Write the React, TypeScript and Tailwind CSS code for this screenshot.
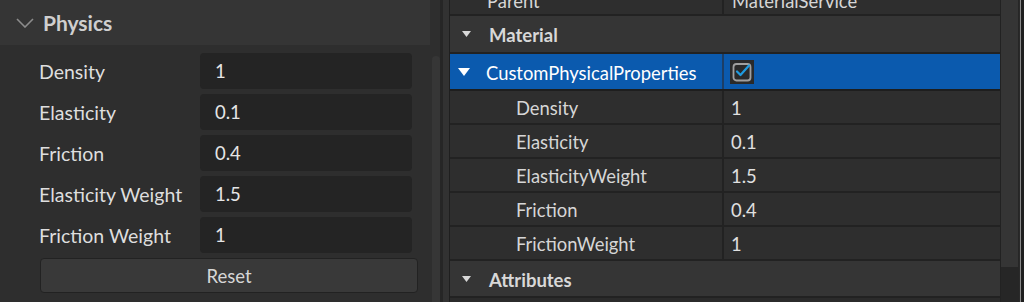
const leftRows = [
  { label: "Density", value: "1" },
  { label: "Elasticity", value: "0.1" },
  { label: "Friction", value: "0.4" },
  { label: "Elasticity Weight", value: "1.5" },
  { label: "Friction Weight", value: "1" },
];

const tableRows = [
  { label: "Density", value: "1" },
  { label: "Elasticity", value: "0.1" },
  { label: "ElasticityWeight", value: "1.5" },
  { label: "Friction", value: "0.4" },
  { label: "FrictionWeight", value: "1" },
];

const Chevron = () => (
  <svg width="18" height="10" viewBox="0 0 18 10" className="shrink-0">
    <path d="M1 1 L9 9 L17 1" fill="none" stroke="#8c8c8c" strokeWidth="1.6" />
  </svg>
);

const SmallTriangle = () => (
  <svg width="9" height="6" viewBox="0 0 9 6" className="shrink-0">
    <path d="M0 0 H9 L4.5 6 Z" fill="#d8d8d8" />
  </svg>
);

const BigTriangle = () => (
  <svg width="12" height="8" viewBox="0 0 12 8" className="shrink-0">
    <path d="M0 0 H12 L6 8 Z" fill="#ffffff" />
  </svg>
);

const CheckBox = () => (
  <div className="w-[24px] h-[24px] bg-[#2a2a2a] flex items-center justify-center">
    <svg width="22" height="22" viewBox="0 0 22 22">
      <rect x="2.5" y="3" width="17" height="16.5" rx="3" fill="none" stroke="#a0a0a0" strokeWidth="1.8" />
      <path d="M6 10.5 L9.5 14 L18 4.5" fill="none" stroke="#1f9be0" strokeWidth="2.2" strokeLinecap="round" strokeLinejoin="round" />
    </svg>
  </div>
);

const PhysicsPanel = () => (
  <div className="w-[440px] h-full flex flex-col bg-[#2e2e2e]">
    <div className="h-[45px] w-[430px] bg-[#353535] flex items-center pl-[16px] gap-[9px] shrink-0">
      <Chevron />
      <span className="text-[21px] font-bold text-[#cfcfcf]">Physics</span>
    </div>
    <div className="flex flex-1">
      <div className="w-[432px] pt-[8px] flex flex-col">
        {leftRows.map((r) => (
          <div key={r.label} className="flex items-center h-[36px] mb-[5px]">
            <span className="w-[200px] pl-[39px] pt-[2px] text-[19.5px] text-[#dedede]">{r.label}</span>
            <div className="w-[212px] h-full bg-[#242424] rounded-[4px] flex items-center pl-[15px] pt-[2px] text-[18.5px] text-[#e6e6e6]">
              {r.value}
            </div>
          </div>
        ))}
        <div className="ml-[40px] w-[378px] h-[35px] bg-[#393939] border border-[#222] rounded-[4px] flex items-center justify-center pt-[3px] text-[18.5px] text-[#d6d6d6]">
          Reset
        </div>
      </div>
      <div className="w-[8px] pt-[11px]">
        <div className="h-full bg-[#363636] rounded-t-[4px]" />
      </div>
    </div>
  </div>
);

const PropertiesTable = () => (
  <div className="flex-1 h-full overflow-hidden bg-[#2b2b2b] text-[18.4px]">
    <div className="h-[16px] overflow-hidden border-b-2 border-[#222]">
      <div className="flex h-[32px] -mt-[16px] bg-[#2e2e2e]">
        <div className="w-[272px] pl-[37px] pt-[3px] flex items-center text-[#d6d6d6]">Parent</div>
        <div className="w-[2px] bg-[#222]" />
        <div className="flex-1 pl-[8px] pt-[3px] flex items-center text-[#d6d6d6]">MaterialService</div>
      </div>
    </div>
    <div className="h-[38px] bg-[#353535] border-b-2 border-[#222] flex items-center pl-[12px] gap-[18px]">
      <SmallTriangle />
      <span className="font-bold text-[#d8d8d8] text-[18.5px] pt-[4px]">Material</span>
    </div>
    <div className="flex h-[37px] bg-[#0b5aae] border-b-2 border-[#1e1e1e]">
      <div className="w-[272px] flex items-center pl-[8px] gap-[16px] text-white">
        <BigTriangle />
        <span className="pt-[4px]">CustomPhysicalProperties</span>
      </div>
      <div className="w-[2px] bg-[#1c3e66]" />
      <div className="flex-1 flex items-center pl-[6px]">
        <CheckBox />
      </div>
    </div>
    {tableRows.map((r) => (
      <div key={r.label} className="flex h-[34px] bg-[#2e2e2e] border-b-2 border-[#222]">
        <div className="w-[272px] pl-[66px] pt-[4px] flex items-center text-[#d6d6d6]">{r.label}</div>
        <div className="w-[2px] bg-[#222]" />
        <div className="flex-1 pl-[7px] pt-[4px] flex items-center text-[#e0e0e0]">{r.value}</div>
      </div>
    ))}
    <div className="h-[37px] bg-[#353535] border-b-2 border-[#222] flex items-center pl-[12px] gap-[18px]">
      <SmallTriangle />
      <span className="font-bold text-[#d8d8d8] text-[18.5px] pt-[4px]">Attributes</span>
    </div>
  </div>
);

export default function App() {
  return (
    <div
      className="w-[1024px] h-[302px] flex bg-[#2b2b2b] overflow-hidden"
      style={{ fontFamily: "Lato, 'Noto Sans', sans-serif" }}
    >
      <PhysicsPanel />
      <div className="w-[10px] h-full flex">
        <div className="w-[3px] bg-[#262626]" />
        <div className="w-[6px] bg-[#323232]" />
        <div className="w-[1px] bg-[#1f1f1f]" />
      </div>
      <div className="flex-1 flex h-full">
        <PropertiesTable />
        <div className="w-[1px] bg-[#222]" />
        <div className="w-[18px] h-full bg-[#262626] flex flex-col">
          <div className="h-[267px] w-[17px] bg-[#353535]" />
        </div>
        <div className="w-[1px] bg-[#2a2a2a]" />
        <div className="w-[1px] bg-[#8a8a8a]" />
        <div className="w-[3px] bg-[#1e1e1e]" />
      </div>
    </div>
  );
}
